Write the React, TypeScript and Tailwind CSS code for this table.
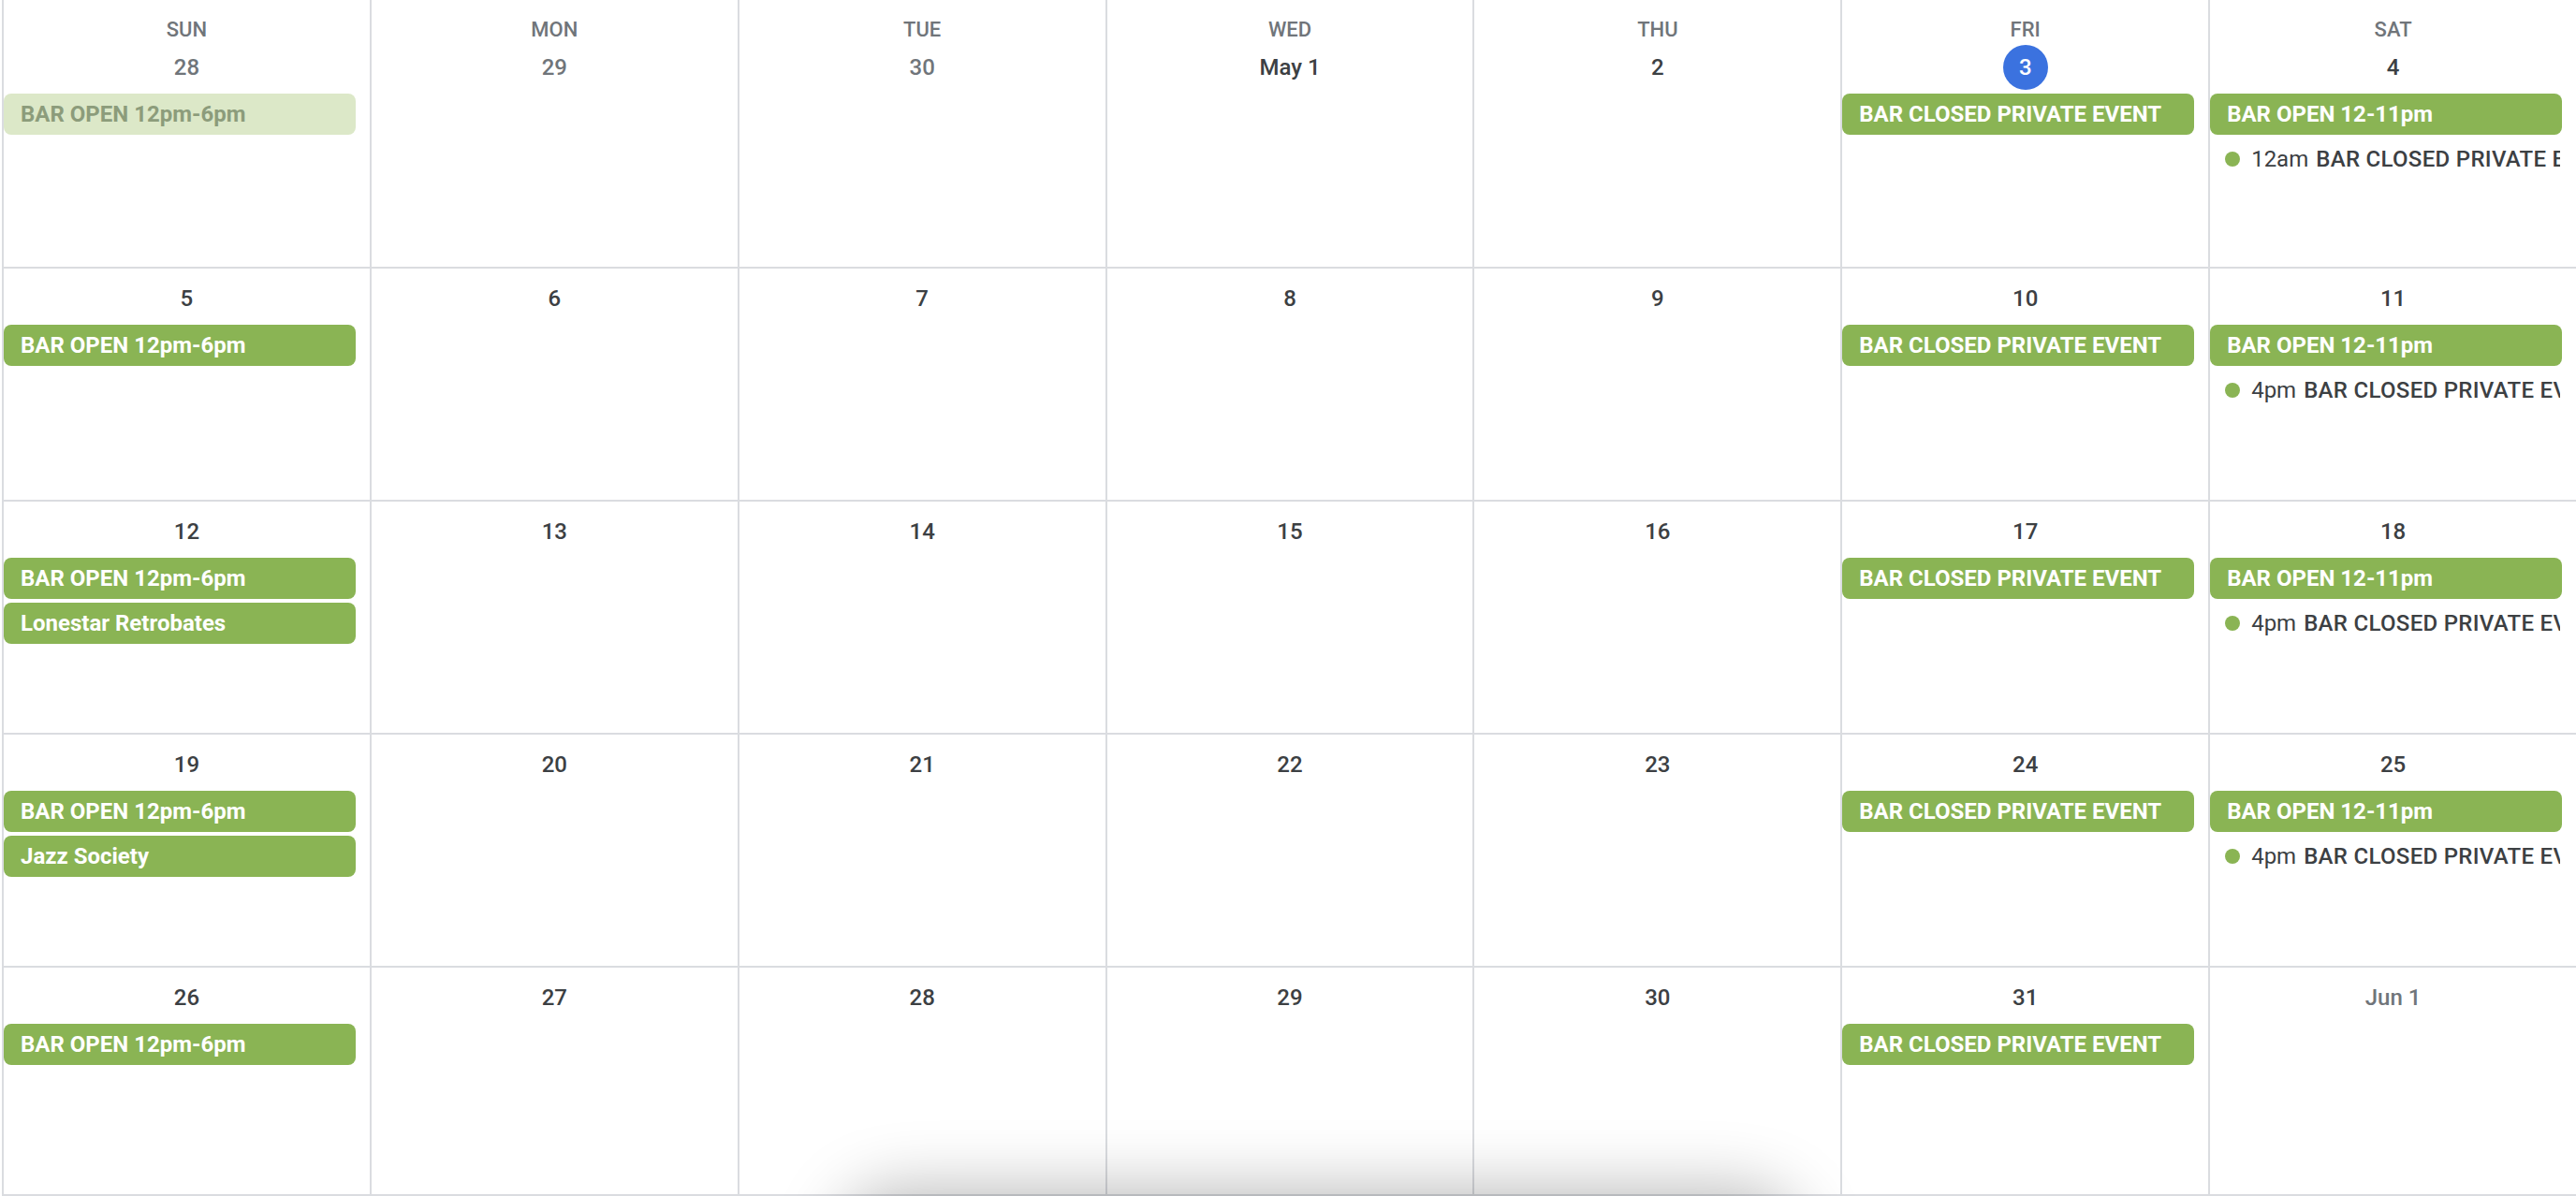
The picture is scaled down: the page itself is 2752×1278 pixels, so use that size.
import React from "react";

type Ev =
  | { kind: "bar"; title: string; faded?: boolean }
  | { kind: "dot"; time: string; title: string };

interface Day {
  label: string;
  muted?: boolean;
  today?: boolean;
  events: Ev[];
}

const DOW = ["SUN", "MON", "TUE", "WED", "THU", "FRI", "SAT"];

const sunday = (extra?: string): Ev[] => {
  const list: Ev[] = [{ kind: "bar", title: "BAR OPEN 12pm-6pm" }];
  if (extra) list.push({ kind: "bar", title: extra });
  return list;
};
const friday: Ev[] = [{ kind: "bar", title: "BAR CLOSED PRIVATE EVENT" }];
const saturday = (time: string): Ev[] => [
  { kind: "bar", title: "BAR OPEN 12-11pm" },
  { kind: "dot", time, title: "BAR CLOSED PRIVATE EVENT" },
];

function week(start: number, sun: Ev[], sat: Ev[]): Day[] {
  return Array.from({ length: 7 }, (_, i) => ({
    label: String(start + i),
    events: i === 0 ? sun : i === 5 ? friday : i === 6 ? sat : [],
  }));
}

const weeks: Day[][] = [
  [
    { label: "28", muted: true, events: [{ kind: "bar", title: "BAR OPEN 12pm-6pm", faded: true }] },
    { label: "29", muted: true, events: [] },
    { label: "30", muted: true, events: [] },
    { label: "May 1", events: [] },
    { label: "2", events: [] },
    { label: "3", today: true, events: friday },
    { label: "4", events: saturday("12am") },
  ],
  week(5, sunday(), saturday("4pm")),
  week(12, sunday("Lonestar Retrobates"), saturday("4pm")),
  week(19, sunday("Jazz Society"), saturday("4pm")),
  [
    ...week(26, sunday(), []).slice(0, 6),
    { label: "Jun 1", muted: true, events: [] },
  ],
];

function EventChip({ ev }: { ev: Ev }) {
  if (ev.kind === "dot") {
    return (
      <div className="flex h-[44px] items-center overflow-hidden whitespace-nowrap pl-[16px] mr-[17px] text-[24px] text-[#3c4043]">
        <span className="mr-[12px] h-[16px] w-[16px] shrink-0 rounded-full bg-[#8ab454]" />
        <span className="mr-[8px]">{ev.time}</span>
        <span className="font-medium tracking-[0.3px]">{ev.title}</span>
      </div>
    );
  }
  return (
    <div
      className={
        ev.faded
          ? "flex h-[44px] items-center overflow-hidden whitespace-nowrap rounded-[8px] bg-[#dce8c8] pl-[18px] mr-[15px] text-[24px] font-bold text-[#8c9c7b]"
          : "flex h-[44px] items-center overflow-hidden whitespace-nowrap rounded-[8px] bg-[#8ab454] pl-[18px] mr-[15px] text-[24px] font-bold text-white"
      }
    >
      {ev.title}
    </div>
  );
}

function Cell({ day, header }: { day: Day; header?: string }) {
  return (
    <div className="flex min-w-0 flex-col border-b-2 border-l-2 border-[#dadce0]">
      {header ? (
        <div className="h-[48px] pt-[20px] text-center text-[22px] leading-[24px] font-medium text-[#70757a]">
          {header}
        </div>
      ) : (
        <div className="h-[8px]" />
      )}
      <div className="flex h-[48px] items-center justify-center">
        {day.today ? (
          <span className="flex h-[48px] w-[48px] items-center justify-center rounded-full bg-[#3b72df] text-[24px] font-medium text-white">
            {day.label}
          </span>
        ) : (
          <span
            className={
              day.muted
                ? "text-[24px] font-medium text-[#70757a]"
                : "text-[24px] font-medium text-[#3c4043]"
            }
          >
            {day.label}
          </span>
        )}
      </div>
      <div className="mt-[4px] flex flex-col gap-[4px]">
        {day.events.map((ev, i) => (
          <EventChip key={i} ev={ev} />
        ))}
      </div>
    </div>
  );
}

export default function App() {
  return (
    <main
      className="relative h-[1278px] w-full overflow-hidden bg-white pl-[2px]"
      style={{ fontFamily: "Roboto, 'Noto Sans', sans-serif" }}
    >
      <div className="grid h-full grid-cols-7 grid-rows-[287px_249px_249px_249px_1fr]">
        {weeks.map((w, wi) =>
          w.map((day, di) => (
            <Cell key={`${wi}-${di}`} day={day} header={wi === 0 ? DOW[di] : undefined} />
          ))
        )}
      </div>

      {/* floating panel just below the fold, only its shadow shows */}
      <div className="absolute left-[920px] top-[1295px] h-[120px] w-[980px] rounded-[40px] bg-white shadow-[0_0_70px_24px_rgba(0,0,0,0.28)]" />
    </main>
  );
}
